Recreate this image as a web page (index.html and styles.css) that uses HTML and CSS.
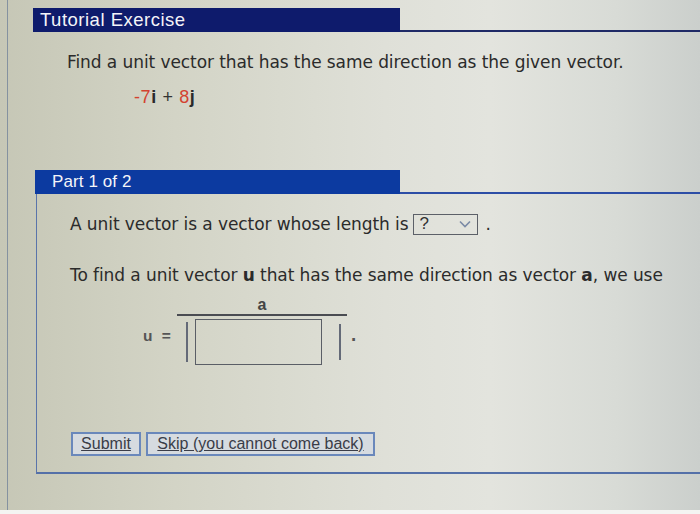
FILE: index.html
```html
<!DOCTYPE html>
<html>
<head>
<meta charset="utf-8">
<link rel="stylesheet" href="styles.css">
</head>
<body>
<div class="frame">
  <div class="head">
    <div class="title-bar">Tutorial Exercise</div>
    <div class="head-rule"></div>
  </div>
  <p class="question">Find a unit vector that has the same direction as the given vector.</p>
  <p class="vector"><span class="num">-7</span><b>i</b> + <span class="num">8</span><b>j</b></p>

  <div class="part">
    <div class="head part-head">
      <div class="title-bar part-bar">Part 1 of 2</div>
      <div class="head-rule part-rule"></div>
    </div>
    <div class="part-body">
      <div class="line line1">
        <span>A unit vector is a vector whose length is</span>
        <span class="select"><span class="sel-val">?</span>
          <svg class="chev" width="12" height="8" viewBox="0 0 12 8"><path d="M1 1.5 L6 6.5 L11 1.5" fill="none" stroke="#7b8aa6" stroke-width="1.6"/></svg>
        </span>
        <span class="dot">.</span>
      </div>
      <div class="line line2">To find a unit vector <b>u</b> that has the same direction as vector <b>a</b>, we use</div>
      <div class="formula">
        <span class="lhs">u =</span>
        <div class="frac">
          <div class="numer">a</div>
          <div class="frac-line"></div>
          <div class="denom">
            <span class="bar"></span>
            <span class="box"></span>
            <span class="bar bar-r"></span>
          </div>
        </div>
        <span class="fdot">.</span>
      </div>
      <div class="buttons">
        <span class="btn btn-submit">Submit</span>
        <span class="btn btn-skip">Skip (you cannot come back)</span>
      </div>
    </div>
  </div>
</div>
<div class="strip"></div>
</body>
</html>
```

FILE: styles.css
```css
html, body {
  margin: 0;
  padding: 0;
}
body {
  width: 700px;
  height: 514px;
  overflow: hidden;
  background: linear-gradient(90deg, #c6c7b6 0%, #d3d4c6 25%, #dfe0d8 55%, #e3e4de 70%, #d8dbd6 88%, #cbcfcc 100%);
  font-family: "DejaVu Sans", "Liberation Sans", sans-serif;
  color: #2b2b2b;
}
.frame {
  margin-left: 7px;
  border-left: 1px solid #8592a0;
  height: 510px;
  box-sizing: border-box;
  padding-top: 8px;
}
.strip {
  height: 4px;
  background: #f4f4f2;
}
.head {
  display: flex;
  align-items: flex-end;
  margin-left: 25px;
}
.title-bar {
  width: 367px;
  height: 24px;
  box-sizing: border-box;
  padding-left: 7px;
  background: #0e1b6c;
  color: #f4f4f8;
  font-family: "Liberation Sans", Arial, sans-serif;
  font-size: 18.5px;
  line-height: 24px;
  letter-spacing: 0.5px;
}
.head-rule {
  flex: 1;
  height: 2px;
  background: #1f2a66;
}
.question {
  margin: 21px 0 0 59px;
  font-size: 17px;
  line-height: 18px;
  letter-spacing: -0.08px;
}
.vector {
  margin: 17px 0 0 126px;
  font-family: "Liberation Sans", Arial, sans-serif;
  font-size: 18px;
  line-height: 18px;
  letter-spacing: 0.6px;
  word-spacing: 0px;
  color: #333;
}
.vector b {
  font-weight: bold;
  color: #2a2a2a;
}
.num {
  color: #d3422f;
}
.part {
  margin-top: 64px;
}
.part-head {
  margin-left: 27px;
}
.part-bar {
  width: 365px;
  padding-left: 17px;
  font-size: 17px;
  letter-spacing: 0.1px;
  background: #0c3aa0;
}
.part-rule {
  background: #2d4ea6;
}
.part-body {
  margin-left: 28px;
  height: 280px;
  box-sizing: border-box;
  border-left: 1px solid #5a74aa;
  border-bottom: 2px solid #5470a8;
  padding: 19px 0 0 33px;
}
.line {
  font-size: 17px;
  line-height: 18px;
  letter-spacing: -0.08px;
}
.line1 {
  display: flex;
  align-items: center;
  height: 22px;
}
.select {
  display: inline-flex;
  align-items: center;
  justify-content: space-between;
  width: 65px;
  height: 21px;
  box-sizing: border-box;
  margin-left: 4px;
  padding: 0 6px 0 6px;
  border: 1.5px solid #5c6068;
  font-family: "Liberation Sans", Arial, sans-serif;
  font-size: 17px;
  color: #333;
}
.dot {
  margin-left: 8px;
}
.line2 {
  margin-top: 31px;
}
.formula {
  display: flex;
  align-items: flex-start;
  margin: 13px 0 0 73px;
}
.lhs {
  align-self: flex-end;
  margin-bottom: 21px;
  font-family: "Liberation Sans", Arial, sans-serif;
  font-weight: bold;
  font-size: 15.5px;
  line-height: 16px;
  color: #555;
  word-spacing: 5px;
}
.frac {
  display: flex;
  flex-direction: column;
  align-items: center;
  width: 170px;
  margin-left: 6px;
}
.numer {
  font-family: "Liberation Sans", Arial, sans-serif;
  font-weight: bold;
  font-size: 16px;
  line-height: 16px;
  color: #444;
}
.frac-line {
  width: 100%;
  height: 2px;
  margin-top: 1px;
  background: #4a4c52;
}
.denom {
  display: flex;
  align-items: center;
  width: 100%;
  margin-top: 3px;
  padding-left: 9px;
  box-sizing: border-box;
}
.bar {
  width: 2px;
  height: 40px;
  background: #646a78;
}
.box {
  width: 127px;
  height: 46px;
  box-sizing: border-box;
  margin-left: 7px;
  border: 1.5px solid #5a5e66;
}
.bar-r {
  margin-left: 17px;
  height: 36px;
}
.fdot {
  align-self: flex-end;
  margin: 0 0 21px 4px;
  font-size: 15px;
  font-weight: bold;
  line-height: 16px;
  color: #555;
}
.buttons {
  display: flex;
  gap: 5px;
  margin: 67px 0 0 1px;
}
.btn {
  height: 24px;
  box-sizing: border-box;
  border: 2px solid #6a88bb;
  background: #d6dbe0;
  font-family: "Liberation Sans", Arial, sans-serif;
  font-size: 16px;
  line-height: 20px;
  color: #3a3d48;
  text-decoration: underline;
  text-align: center;
}
.btn-submit {
  width: 70px;
}
.btn-skip {
  width: 229px;
}
```
